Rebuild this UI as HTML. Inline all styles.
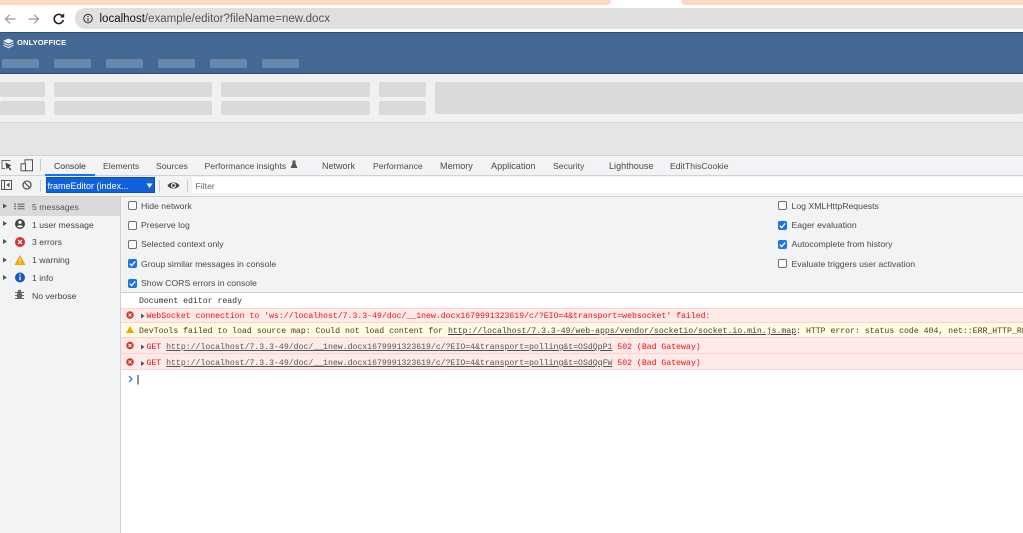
<!DOCTYPE html>
<html><head><meta charset="utf-8">
<style>
html,body{margin:0;padding:0;background:#fff}
#p{position:relative;width:1023px;height:533px;overflow:hidden;background:#fff;font-family:"Liberation Sans",sans-serif;font-size:8.7px;color:#4a4a4a}
.b{position:absolute}
.t{position:absolute;white-space:nowrap;line-height:12px}
.m{position:absolute;white-space:nowrap;font-family:"Liberation Mono",monospace;font-size:8.18px;line-height:12px;color:#333}
.r{color:#f01010}
u{text-decoration:underline}
.ph{position:absolute;background:#d9dadc;border-radius:2px}
.bp{position:absolute;background:#6a88ab;border-radius:2px;top:59px;width:37px;height:9px}
.cb{position:absolute;width:7px;height:7px;border:1px solid #6e6e6e;border-radius:2px;background:#fff}
.cc{position:absolute;width:9px;height:9px;border-radius:2px;background:#1a73e8}
svg{position:absolute;overflow:visible}
</style></head><body><div id="p">

<div class="b" style="left:0;top:0;width:611px;height:5px;background:#ffd8c4;border-radius:0 0 4px 0"></div>
<div class="b" style="left:681px;top:0;width:342px;height:5px;background:#ffd8c4;border-radius:0 0 0 4px"></div>

<svg style="left:4px;top:12px" width="70" height="14" fill="none">
<path d="M11.500 7H1.500M6 2.500L1.500 7 6 11.500" stroke="#999" stroke-width="1.200"/>
<path d="M24.500 7h10M30 2.500L34.500 7 30 11.500" stroke="#999" stroke-width="1.200"/>
<path d="M58.700 4.500A4.600 4.600 0 1 0 59.300 8" stroke="#222" stroke-width="1.600"/>
<path d="M56 5.500h4.200v-4.200z" fill="#222"/>
</svg>
<div class="b" style="left:75px;top:8px;width:948px;height:21px;background:#e0e0e0;border-radius:10px 0 0 10px"></div>
<svg style="left:82.500px;top:13px" width="12" height="12" fill="none"><circle cx="5" cy="5.500" r="4.200" stroke="#333" stroke-width="1"/><path d="M5 5v3.200M5 2.800v1.200" stroke="#333" stroke-width="1.100"/></svg>
<div class="t" style="left:99.500px;top:12.500px;font-size:11.500px;line-height:13px;color:#555"><span style="color:#111">localhost</span>/example/editor?fileName=new.docx</div>

<div class="b" style="left:0;top:32px;width:1023px;height:42px;background:#446995;border-top:1px solid #2f5178;border-bottom:1px solid #2f5178;box-sizing:border-box"></div>
<svg style="left:3px;top:38px" width="12" height="11" fill="none"><path d="M5.500 0.500L11 3 5.500 5.500 0 3z" fill="#fff" opacity=".9"/><path d="M0.500 5L5.500 7.300 10.500 5M0.500 7.300L5.500 9.800 10.500 7.300" stroke="#fff" stroke-width="1.100" opacity=".85"/></svg>
<div class="t" style="left:17px;top:37px;color:#fff;font-size:7.600px;font-weight:bold;letter-spacing:.1px">ONLYOFFICE</div>
<div class="bp" style="left:2px"></div><div class="bp" style="left:54px"></div><div class="bp" style="left:106px"></div><div class="bp" style="left:158px"></div><div class="bp" style="left:210px"></div><div class="bp" style="left:262px"></div>

<div class="b" style="left:0;top:74px;width:1023px;height:48px;background:#f1f1f1"></div>
<div class="ph" style="left:0;top:82px;width:45px;height:15px"></div>
<div class="ph" style="left:0;top:101px;width:45px;height:14px"></div>
<div class="ph" style="left:54px;top:82px;width:158px;height:15px"></div>
<div class="ph" style="left:54px;top:101px;width:158px;height:14px"></div>
<div class="ph" style="left:221px;top:82px;width:149px;height:15px"></div>
<div class="ph" style="left:221px;top:101px;width:149px;height:14px"></div>
<div class="ph" style="left:379px;top:82px;width:47px;height:15px"></div>
<div class="ph" style="left:379px;top:101px;width:47px;height:14px"></div>
<div class="ph" style="left:435px;top:82px;width:588px;height:32px"></div>
<div class="b" style="left:0;top:122px;width:1023px;height:1px;background:#d6d6d6"></div>
<div class="b" style="left:0;top:123px;width:1023px;height:32px;background:#e5e5e5"></div>

<div class="b" style="left:0;top:155px;width:1023px;height:20px;background:#f1f3f4;border-top:1px solid #d0d2d5;box-sizing:border-box"></div>
<div class="b" style="left:0;top:175px;width:1023px;height:1px;background:#cfd1d4"></div>
<svg style="left:1px;top:159px" width="32" height="14" fill="none">
<path d="M9.500 1.500H1v8h3" stroke="#666" stroke-width="1"/><path d="M4.500 3.500l6 3-2.500 1 2.500 3-1.200 1-2.300-3-1.500 2z" fill="#444"/>
<rect x="24" y="0.800" width="7.500" height="11" stroke="#555" stroke-width="1"/><rect x="20" y="4.800" width="4.500" height="7" fill="#f1f3f4" stroke="#555" stroke-width="1"/>
</svg>
<div class="b" style="left:40px;top:159px;width:1px;height:12px;background:#ccc"></div>
<div class="t" style="left:54px;top:159.500px;color:#333">Console</div>
<div class="b" style="left:45px;top:173.500px;width:50px;height:2px;background:#1a73e8"></div>
<div class="t" style="left:103px;top:159.500px">Elements</div>
<div class="t" style="left:156px;top:159.500px">Sources</div>
<div class="t" style="left:204.500px;top:159.500px">Performance insights</div>
<svg style="left:290px;top:160px" width="8" height="9"><path d="M2.500 0.500h3v3L7.500 8h-7l2-4.500z" fill="#555"/></svg>
<div class="t" style="left:322px;top:159.500px;font-size:9px">Network</div>
<div class="t" style="left:373px;top:159.500px">Performance</div>
<div class="t" style="left:440px;top:159.500px;font-size:9.100px">Memory</div>
<div class="t" style="left:491px;top:159.500px;font-size:9.100px">Application</div>
<div class="t" style="left:553px;top:159.500px">Security</div>
<div class="t" style="left:609px;top:159.500px;font-size:9.100px">Lighthouse</div>
<div class="t" style="left:670px;top:159.500px">EditThisCookie</div>

<div class="b" style="left:0;top:176px;width:1023px;height:20px;background:#f1f3f4"></div>
<div class="b" style="left:0;top:196px;width:1023px;height:1px;background:#cfd1d4"></div>
<svg style="left:1px;top:180px" width="32" height="12" fill="none">
<rect x="0.500" y="0.500" width="10" height="9" stroke="#555"/><path d="M3.500 0.500v9" stroke="#555"/><path d="M8.500 2.500v5l-3-2.500z" fill="#555"/>
<circle cx="26" cy="5" r="4" stroke="#555" stroke-width="1.300"/><path d="M23.300 2.300l5.400 5.400" stroke="#555" stroke-width="1.300"/>
</svg>
<div class="b" style="left:40px;top:180px;width:1px;height:12px;background:#ccc"></div>
<div class="b" style="left:45.500px;top:177px;width:109px;height:16px;background:#0f62dc;border:1px solid #0d4fb0;box-sizing:border-box"></div>
<div class="t" style="left:47.500px;top:179.500px;color:#fff;font-size:9px">frameEditor (index...</div>
<svg style="left:146px;top:183px" width="8" height="6"><path d="M0.500 0.500h6L3.500 5z" fill="#fff"/></svg>
<div class="b" style="left:159px;top:180px;width:1px;height:12px;background:#ccc"></div>
<svg style="left:167px;top:181px" width="13" height="9"><path d="M0.500 4.500C3 0.500 10 0.500 12.500 4.500 10 8.500 3 8.500 0.500 4.500z" fill="#444"/><circle cx="6.500" cy="4.500" r="2.500" fill="#f1f3f4"/><circle cx="6.500" cy="4.500" r="1.400" fill="#444"/></svg>
<div class="b" style="left:187px;top:180px;width:1px;height:12px;background:#ccc"></div>
<div class="b" style="left:192px;top:177px;width:831px;height:16px;background:#fff"></div>
<div class="t" style="left:195.500px;top:180px;color:#666">Filter</div>

<div class="b" style="left:0;top:197px;width:120px;height:336px;background:#f1f3f4"></div>
<div class="b" style="left:0;top:197px;width:120px;height:19px;background:#dadada"></div>
<div class="b" style="left:120px;top:197px;width:1px;height:336px;background:#cfd1d4"></div>
<svg style="left:3px;top:202px" width="46" height="100">
<g fill="#555"><path d="M0 1.500v5l4-2.500zM0 19v5l4-2.500zM0 37v5l4-2.500zM0 55.500v5l4-2.500zM0 73v5l4-2.500z"/></g>
<path d="M11 1.500h2v1.300h-2zM14.500 1.500h7v1.300h-7zM11 3.800h2v1.300h-2zM14.500 3.800h7v1.300h-7zM11 6.100h2v1.300h-2zM14.500 6.100h7v1.300h-7z" fill="#777"/>
<circle cx="17" cy="22" r="5" fill="#444"/><circle cx="17" cy="20.300" r="1.700" fill="#f1f3f4"/><path d="M14 24.500c1-1.600 5-1.600 6 0-1 1.200-5 1.200-6 0z" fill="#f1f3f4"/>
<circle cx="17" cy="40" r="5" fill="#d93025"/><path d="M15 38l4 4M19 38l-4 4" stroke="#fff" stroke-width="1.300"/>
<path d="M17 53l5.500 10h-11z" fill="#f2a600"/><path d="M17 56.500v3.500M17 60.800v1" stroke="#fff" stroke-width="1"/>
<circle cx="17" cy="75.500" r="5" fill="#1a56c4"/><path d="M17 74.500v3.600M17 72.300v1.200" stroke="#fff" stroke-width="1.300"/>
<ellipse cx="16.500" cy="93.500" rx="2.800" ry="3.600" fill="#666"/><path d="M12 90.500l9 0M12 93.500h9M12 96.500h9" stroke="#666" stroke-width="1"/><circle cx="16.500" cy="89.500" r="1.700" fill="#666"/>
</svg>
<div class="t" style="left:32px;top:200.500px;color:#555">5 messages</div>
<div class="t" style="left:32px;top:218.500px;color:#444">1 user message</div>
<div class="t" style="left:32px;top:236px;color:#444">3 errors</div>
<div class="t" style="left:32px;top:254px;color:#444">1 warning</div>
<div class="t" style="left:32px;top:271.500px;color:#444">1 info</div>
<div class="t" style="left:32px;top:289.500px;color:#444">No verbose</div>

<div class="b" style="left:121px;top:197px;width:902px;height:96px;background:#f1f3f4"></div>
<div class="b" style="left:121px;top:292px;width:902px;height:1px;background:#cfd1d4"></div>

<div class="cb" style="left:127.500px;top:201px"></div><div class="t" style="left:141px;top:199.700px">Hide network</div>
<div class="cb" style="left:127.500px;top:220.500px"></div><div class="t" style="left:141px;top:219px">Preserve log</div>
<div class="cb" style="left:127.500px;top:240px"></div><div class="t" style="left:141px;top:238.300px">Selected context only</div>
<div class="cc" style="left:127.500px;top:259px"></div><svg style="left:127.500px;top:259px" width="9" height="9" fill="none"><path d="M1.800 4.700l1.900 1.900 3.500-4.200" stroke="#fff" stroke-width="1.300"/></svg><div class="t" style="left:141px;top:257.700px">Group similar messages in console</div>
<div class="cc" style="left:127.500px;top:279px"></div><svg style="left:127.500px;top:279px" width="9" height="9" fill="none"><path d="M1.800 4.700l1.900 1.900 3.500-4.200" stroke="#fff" stroke-width="1.300"/></svg><div class="t" style="left:141px;top:277px">Show CORS errors in console</div>

<div class="cb" style="left:778.300px;top:201px"></div><div class="t" style="left:791.500px;top:199.700px">Log XMLHttpRequests</div>
<div class="cc" style="left:778.300px;top:220.500px"></div><svg style="left:778.300px;top:220.500px" width="9" height="9" fill="none"><path d="M1.800 4.700l1.900 1.900 3.500-4.200" stroke="#fff" stroke-width="1.300"/></svg><div class="t" style="left:791.500px;top:219px">Eager evaluation</div>
<div class="cc" style="left:778.300px;top:240px"></div><svg style="left:778.300px;top:240px" width="9" height="9" fill="none"><path d="M1.800 4.700l1.900 1.900 3.500-4.200" stroke="#fff" stroke-width="1.300"/></svg><div class="t" style="left:791.500px;top:238.300px">Autocomplete from history</div>
<div class="cb" style="left:778.300px;top:259px"></div><div class="t" style="left:791.500px;top:257.700px">Evaluate triggers user activation</div>

<div class="m" style="left:139px;top:296px">Document editor ready</div>

<div class="b" style="left:121px;top:308px;width:902px;height:15px;background:#ffeaea;border-top:1px solid #ffd0d0;border-bottom:1px solid #ffd0d0;box-sizing:border-box"></div>
<div class="b" style="left:121px;top:323px;width:902px;height:15px;background:#fffbe5;border-bottom:1px solid #ffd0d0;box-sizing:border-box"></div>
<div class="b" style="left:121px;top:338px;width:902px;height:16px;background:#ffeaea;border-bottom:1px solid #ffd0d0;box-sizing:border-box"></div>
<div class="b" style="left:121px;top:354px;width:902px;height:16px;background:#ffeaea;border-bottom:1px solid #ffd0d0;box-sizing:border-box"></div>

<svg style="left:126px;top:310px" width="22" height="66" fill="none">
<circle cx="4" cy="5" r="3.700" fill="#d93025"/><path d="M2.500 3.500l3 3M5.500 3.500l-3 3" stroke="#fff"/>
<path d="M4 16l4 7H0z" fill="#f2a600"/>
<circle cx="4" cy="35.500" r="3.700" fill="#d93025"/><path d="M2.500 34l3 3M5.500 34l-3 3" stroke="#fff"/>
<circle cx="4" cy="52" r="3.700" fill="#d93025"/><path d="M2.500 50.500l3 3M5.500 50.500l-3 3" stroke="#fff"/>
<path d="M15 3.500v5l3.500-2.500zM15 34.500v5l3.500-2.500zM15 51v5l3.500-2.500z" fill="#555"/>
</svg>

<div class="m r" style="left:146.500px;top:311px">WebSocket connection to 'ws://localhost/7.3.3-49/doc/__1new.docx1679991323619/c/?EIO=4&amp;transport=websocket' failed:</div>
<div class="m" style="left:139px;top:326px;color:#5c3b00">DevTools failed to load source map: Could not load content for <u style="color:#444">http://localhost/7.3.3-49/web-apps/vendor/socketio/socket.io.min.js.map</u>: HTTP error: status code 404, net::ERR_HTTP_RESPONSE_CODE_FAILURE</div>
<div class="m r" style="left:146.500px;top:342px">GET <u style="color:#555">http://localhost/7.3.3-49/doc/__1new.docx1679991323619/c/?EIO=4&amp;transport=polling&amp;t=OSdQpP1</u> 502 (Bad Gateway)</div>
<div class="m r" style="left:146.500px;top:358px">GET <u style="color:#555">http://localhost/7.3.3-49/doc/__1new.docx1679991323619/c/?EIO=4&amp;transport=polling&amp;t=OSdQqFW</u> 502 (Bad Gateway)</div>

<svg style="left:128px;top:375px" width="12" height="10" fill="none"><path d="M1 1l3 3-3 3" stroke="#1a73e8" stroke-width="1.200"/><path d="M10 0v9.500" stroke="#222" stroke-width="1"/></svg>

</div></body></html>
